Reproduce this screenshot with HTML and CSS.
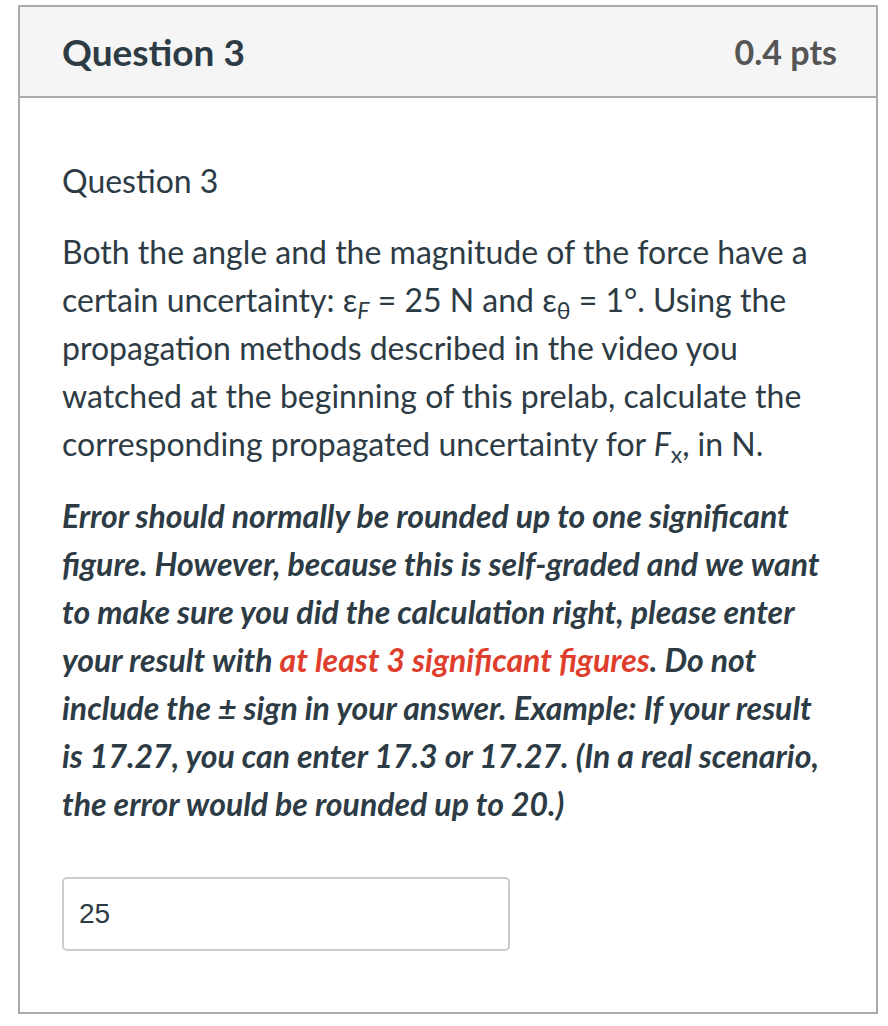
FILE: index.html
```html
<!DOCTYPE html>
<html>
<head>
<meta charset="utf-8">
<link rel="stylesheet" href="styles.css">
</head>
<body>
<div class="card">
  <div class="card-header">
    <h2 class="q-title">Question 3</h2>
    <span class="q-pts">0.4 pts</span>
  </div>
  <div class="card-body">
    <div class="q-name">Question 3</div>
    <p class="q-text">Both the angle and the magnitude of the force have a certain uncertainty: ε<sub class="it">F</sub> = 25 N and ε<sub>θ</sub> = 1°. Using the propagation methods described in the video you watched at the beginning of this prelab, calculate the corresponding propagated uncertainty for <span class="it">F</span><sub>x</sub>, in N.</p>
    <p class="q-note">Error should normally be rounded up to one significant figure. However, because this is self-graded and we want to make sure you did the calculation right, please enter your result with <span class="red">at least 3 significant figures</span>. Do not include the ± sign in your answer. Example: If your result is 17.27, you can enter 17.3 or 17.27. (In a real scenario, the error would be rounded up to 20.)</p>
    <div class="answer"><span class="answer-value">25</span></div>
  </div>
</div>
</body>
</html>
```
FILE: styles.css
```css
html, body {
  margin: 0;
  padding: 0;
  background: #ffffff;
}
body {
  font-family: Lato, "Open Sans", sans-serif;
  color: #2d3b45;
}
.card {
  margin: 5px 0 0 18px;
  width: 860px;
  height: 1009px;
  border: 2px solid #aaaaaa;
  box-sizing: border-box;
  display: flex;
  flex-direction: column;
}
.card-header {
  height: 91px;
  box-sizing: border-box;
  background: #f5f5f5;
  border-bottom: 2px solid #aaaaaa;
  display: flex;
  align-items: center;
  justify-content: space-between;
  padding: 0 39px 0 42px;
}
.q-title {
  margin: 0;
  font-size: 37px;
  font-weight: 700;
  color: #2d3b45;
}
.q-pts {
  font-size: 34px;
  font-weight: 700;
  color: #555555;
}
.card-body {
  padding: 59px 42px 0 42px;
}
.q-name {
  font-size: 32px;
  line-height: 48px;
}
.q-text {
  margin: 23px 0 0 0;
  font-size: 32px;
  line-height: 48px;
}
sub {
  font-size: 23px;
  line-height: 0;
  vertical-align: -7px;
}
.it {
  font-style: italic;
}
.q-note {
  margin: 24px 0 0 0;
  font-size: 32px;
  line-height: 48px;
  font-weight: 700;
  font-style: italic;
}
.red {
  color: #e03e2d;
}
.answer {
  margin-top: 49px;
  width: 448px;
  height: 74px;
  box-sizing: border-box;
  border: 2px solid #cccccc;
  border-radius: 5px;
  display: flex;
  align-items: center;
  padding-left: 15px;
}
.answer-value {
  font-family: "Liberation Sans", Arial, sans-serif;
  font-size: 28px;
  color: #2d3b45;
}
```
